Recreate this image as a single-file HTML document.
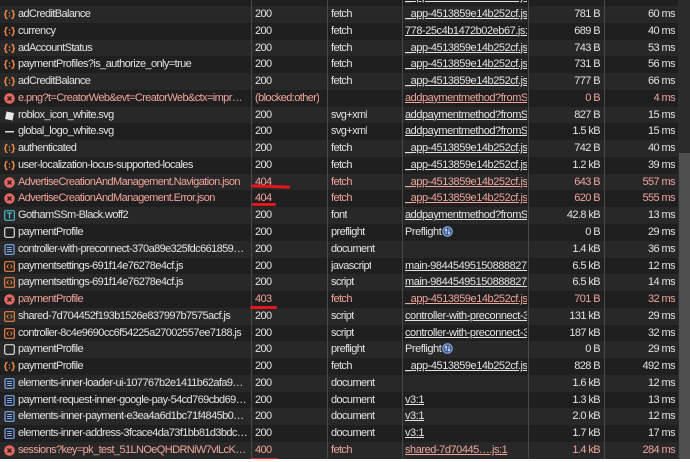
<!DOCTYPE html>
<html><head><meta charset="utf-8"><style>
*{margin:0;padding:0;box-sizing:border-box}
body{width:690px;height:462px;background:#fff;overflow:hidden;font-family:"Liberation Sans",sans-serif;font-size:11px;letter-spacing:-0.6px;color:#e3e3e3;position:relative}
#wrap{position:absolute;left:0;top:0;width:690px;height:459px;background:#1f1f1f;overflow:hidden}
.r{position:absolute;left:0;width:678px;height:16.8px;line-height:16.8px;white-space:nowrap}
.r.a{background:#282828}
.r.b{background:#1f1f1f}
.r span{position:absolute;top:0;overflow:hidden;text-overflow:ellipsis}
.n{left:18px;width:230px}
.s{left:255px}
.t{left:331px}
.r span.i{left:405px;width:122px;text-decoration:underline;overflow:hidden;text-overflow:clip;letter-spacing:-0.45px}
.z{right:78px;text-align:right}
.m{right:3px;text-align:right}
.e{color:#f0a59c}
.ic{position:absolute;left:4px;top:3px;width:11px;height:11px}
.v{position:absolute;top:0;width:1px;height:459px;background:#4a4a4a}
.red{position:absolute;height:3px;background:#e8141c;border-radius:2px}
</style></head><body><div id="wrap">
<div class="r b" style="top:-11px"><span class="i">_app-4513859e14b252cf.js:1</span></div>
</div>
<script>
const rows=[
["j","adCreditBalance","200","fetch","_app-4513859e14b252cf.js:1","781 B","60 ms"],
["j","currency","200","fetch","778-25c4b1472b02eb67.js:1","689 B","40 ms"],
["j","adAccountStatus","200","fetch","_app-4513859e14b252cf.js:1","743 B","53 ms"],
["j","paymentProfiles?is_authorize_only=true","200","fetch","_app-4513859e14b252cf.js:1","731 B","56 ms"],
["j","adCreditBalance","200","fetch","_app-4513859e14b252cf.js:1","777 B","66 ms"],
["x","e.png?t=CreatorWeb&evt=CreatorWeb&ctx=impres…","(blocked:other)","","addpaymentmethod?fromSuc","0 B","4 ms",1],
["w","roblox_icon_white.svg","200","svg+xml","addpaymentmethod?fromSuc","827 B","15 ms"],
["g","global_logo_white.svg","200","svg+xml","addpaymentmethod?fromSuc","1.5 kB","15 ms"],
["j","authenticated","200","fetch","_app-4513859e14b252cf.js:1","742 B","40 ms"],
["j","user-localization-locus-supported-locales","200","fetch","_app-4513859e14b252cf.js:1","1.2 kB","39 ms"],
["x","AdvertiseCreationAndManagement.Navigation.json","404","fetch","_app-4513859e14b252cf.js:1","643 B","557 ms",1],
["x","AdvertiseCreationAndManagement.Error.json","404","fetch","_app-4513859e14b252cf.js:1","620 B","555 ms",1],
["f","GothamSSm-Black.woff2","200","font","addpaymentmethod?fromSuc","42.8 kB","13 ms"],
["p","paymentProfile","200","preflight","Preflight","0 B","29 ms"],
["d","controller-with-preconnect-370a89e325fdc661859d0…","200","document","","1.4 kB","36 ms"],
["s","paymentsettings-691f14e76278e4cf.js","200","javascript","main-98445495150888827.js:1","6.5 kB","12 ms"],
["s","paymentsettings-691f14e76278e4cf.js","200","script","main-98445495150888827.js:1","6.5 kB","14 ms"],
["x","paymentProfile","403","fetch","_app-4513859e14b252cf.js:1","701 B","32 ms",1],
["s","shared-7d704452f193b1526e837997b7575acf.js","200","script","controller-with-preconnect-3","131 kB","29 ms"],
["s","controller-8c4e9690cc6f54225a27002557ee7188.js","200","script","controller-with-preconnect-3","187 kB","32 ms"],
["p","paymentProfile","200","preflight","Preflight","0 B","29 ms"],
["j","paymentProfile","200","fetch","_app-4513859e14b252cf.js:1","828 B","492 ms"],
["d","elements-inner-loader-ui-107767b2e1411b62afa906…","200","document","","1.6 kB","12 ms"],
["d","payment-request-inner-google-pay-54cd769cbd69f…","200","document","v3:1","1.3 kB","13 ms"],
["d","elements-inner-payment-e3ea4a6d1bc71f4845b029…","200","document","v3:1","2.0 kB","12 ms"],
["d","elements-inner-address-3fcace4da73f1bb81d3bdc7a…","200","document","v3:1","1.7 kB","17 ms"],
["x","sessions?key=pk_test_51LNOeQHDRNiW7vlLcKH8TG…","400","fetch","shared-7d70445….js:1","1.4 kB","284 ms",1]];
const icons={
j:'<svg class="ic" viewBox="0 0 11 11"><path d="M3.5 1.5Q1.5 1.5 1.5 3.5V4.5L0.8 5.5L1.5 6.5V7.5Q1.5 9.5 3.5 9.5M7.5 1.5Q9.5 1.5 9.5 3.5V4.5L10.2 5.5L9.5 6.5V7.5Q9.5 9.5 7.5 9.5" fill="none" stroke="#f08a4b" stroke-width="1.4"/><circle cx="5.5" cy="4" r=".8" fill="#f08a4b"/><circle cx="5.5" cy="7" r=".8" fill="#f08a4b"/></svg>',
x:'<svg class="ic" viewBox="0 0 11 11"><circle cx="5.5" cy="5.5" r="5.3" fill="#e46962"/><path d="M3.5 3.5L7.5 7.5M7.5 3.5L3.5 7.5" stroke="#1f1f1f" stroke-width="1.4"/></svg>',
w:'<svg class="ic" viewBox="0 0 11 11"><path d="M2.5 1.5L10 3L8.5 10.5L1 9Z" fill="#e8e8e8"/></svg>',
g:'<svg class="ic" viewBox="0 0 11 11"><rect x="1" y="5" width="9" height="1.5" fill="#ddd"/></svg>',
f:'<svg class="ic" viewBox="0 0 11 11"><rect x=".7" y=".7" width="9.6" height="9.6" rx="1" fill="none" stroke="#4bb8c8" stroke-width="1.2"/><path d="M3 3H8M5.5 3V8.5" stroke="#4bb8c8" stroke-width="1.3"/></svg>',
p:'<svg class="ic" viewBox="0 0 11 11"><rect x=".7" y=".7" width="9.6" height="9.6" rx="1.5" fill="none" stroke="#ddd" stroke-width="1.2"/></svg>',
d:'<svg class="ic" viewBox="0 0 11 11"><rect x="1" y=".7" width="9" height="9.6" rx="1" fill="none" stroke="#7ca8f0" stroke-width="1.2"/><path d="M3 3.5H8M3 5.5H8M3 7.5H8" stroke="#7ca8f0" stroke-width="1"/></svg>',
s:'<svg class="ic" viewBox="0 0 11 11"><rect x=".7" y=".7" width="9.6" height="9.6" rx="1" fill="none" stroke="#e8834a" stroke-width="1.2"/><path d="M4.5 3.5L3 5.5L4.5 7.5M6.5 3.5L8 5.5L6.5 7.5" fill="none" stroke="#e8834a" stroke-width="1"/></svg>'};
let h='';
rows.forEach((r,k)=>{const top=6+k*16.77;const e=r[7]?' e':'';
const ini=r[4]=='Preflight'?'<span class="i" style="text-decoration:none">Preflight<svg width="11" height="11" viewBox="0 0 11 11" style="vertical-align:-2px;margin-left:1px"><circle cx="5.5" cy="5.5" r="4.8" fill="#3d5a8a" stroke="#8ab4f8" stroke-width="1"/><path d="M4 3V8M7 3V8M3 4.5L4 3L5 4.5M6 6.5L7 8L8 6.5" fill="none" stroke="#dfe8fb" stroke-width=".8"/></svg></span>':'<span class="i'+e+'">'+r[4]+'</span>';
h+='<div class="r '+(k%2?'b':'a')+'" style="top:'+top+'px">'+icons[r[0]]+'<span class="n'+e+'">'+r[1]+'</span><span class="s'+e+'">'+r[2]+'</span><span class="t'+e+'">'+r[3]+'</span>'+ini+'<span class="z'+e+'">'+r[5]+'</span><span class="m'+e+'">'+r[6]+'</span></div>';});
h+='<div class="v" style="left:251px"></div><div class="v" style="left:327px"></div><div class="v" style="left:402px"></div><div class="v" style="left:528px"></div><div class="v" style="left:604px"></div>';
h+='<div style="position:absolute;left:678px;top:0;width:12px;height:459px;background:#2b2b2b"></div><div style="position:absolute;left:679px;top:153px;width:11px;height:306px;background:#4f4f4f"></div>';
h+='<div class="red" style="left:251px;top:185px;width:39px;transform:rotate(2deg)"></div><div class="red" style="left:252px;top:203px;width:24px"></div><div class="red" style="left:250px;top:306px;width:27px"></div><div class="red" style="left:251px;top:458px;width:27px"></div>';
document.getElementById('wrap').insertAdjacentHTML('beforeend',h);
</script>
</body></html>
